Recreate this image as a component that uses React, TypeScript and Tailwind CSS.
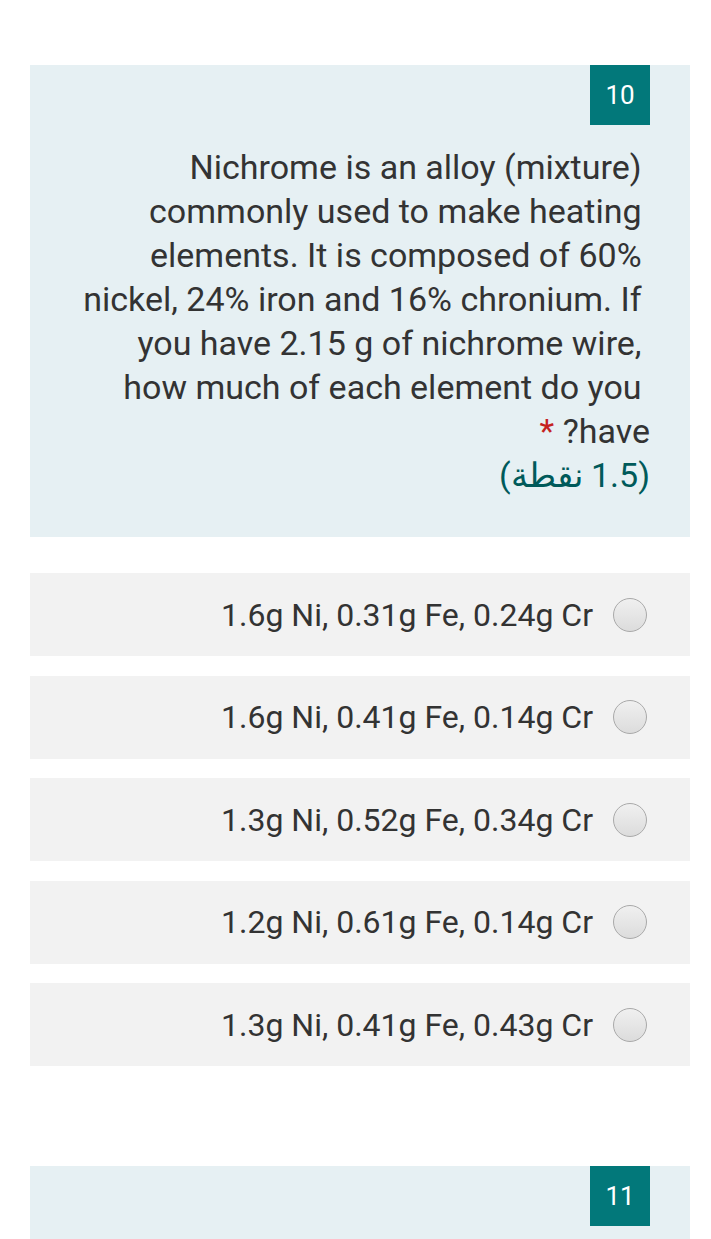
import React from 'react';

const options = [
  '1.6g Ni, 0.31g Fe, 0.24g Cr',
  '1.6g Ni, 0.41g Fe, 0.14g Cr',
  '1.3g Ni, 0.52g Fe, 0.34g Cr',
  '1.2g Ni, 0.61g Fe, 0.14g Cr',
  '1.3g Ni, 0.41g Fe, 0.43g Cr',
];

const Badge: React.FC<{ n: number }> = ({ n }) => (
  <div className="w-[60px] h-[60px] bg-[#02787a] text-white text-[26px] flex items-center justify-center">
    {n}
  </div>
);

const App: React.FC = () => {
  return (
    <div className="bg-white pt-[65px] pb-[20px] pl-[30px] font-['Roboto','Noto_Sans',sans-serif] text-[#333]">
      <div dir="rtl" className="w-[660px]">
        <div className="bg-[#e6f0f3] pr-[40px] pl-[50px] pb-[40px]">
          <div className="flex">
            <Badge n={10} />
          </div>
          <div className="mt-[20px] text-[34px] leading-[44px] text-right whitespace-break-spaces">
            Nichrome is an alloy (mixture) commonly used to make heating elements. It is composed of 60% nickel, 24% iron and 16% chronium. If you have 2.15 g of nichrome wire, how much of each element do you have?<span className="text-[#c5221f]"> *</span>
          </div>
          <div className="text-[34px] leading-[44px] text-[#005a5a]">
            (1.5 نقطة)
          </div>
        </div>

        <div className="mt-[36px] flex flex-col gap-[19.5px]">
          {options.map((o) => (
            <label
              key={o}
              className="bg-[#f2f2f2] h-[83px] flex items-center pr-[43px] gap-[20px]"
            >
              <span className="w-[34px] h-[34px] rounded-full border border-[#a9a9a9] bg-gradient-to-b from-[#f0f0f0] to-[#dcdcdc] shrink-0" />
              <span dir="ltr" className="text-[32px]">{o}</span>
            </label>
          ))}
        </div>

        <div className="mt-[100px] bg-[#e6f0f3] pr-[40px] h-[80px]">
          <div className="flex">
            <Badge n={11} />
          </div>
        </div>
      </div>
    </div>
  );
};

export default App;
